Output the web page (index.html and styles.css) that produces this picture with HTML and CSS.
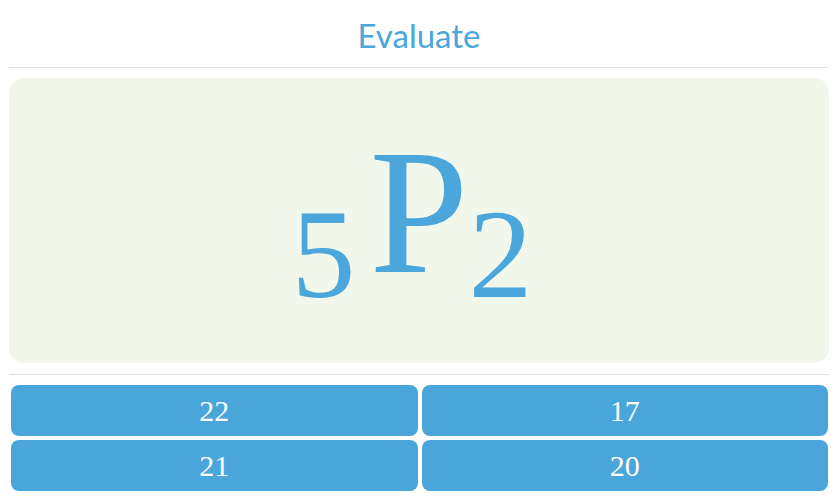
FILE: index.html
```html
<!DOCTYPE html>
<html>
<head>
<meta charset="utf-8">
<link rel="stylesheet" href="styles.css">
</head>
<body>
<div class="page">
  <header class="title">Evaluate</header>
  <div class="panel">
    <div class="math"><span class="pre">5</span><span class="main">P</span><span class="sub">2</span></div>
  </div>
  <div class="answers">
    <button class="ans">22</button>
    <button class="ans">17</button>
    <button class="ans">21</button>
    <button class="ans">20</button>
  </div>
</div>
</body>
</html>
```

FILE: styles.css
```css
html, body {
  margin: 0;
  padding: 0;
  background: #ffffff;
}
.page {
  margin: 0 11px 0 9px;
}
.title {
  height: 68px;
  border-bottom: 1px solid #e2e2e2;
  display: flex;
  align-items: center;
  justify-content: center;
  font-family: Lato, "Open Sans", sans-serif;
  font-size: 33px;
  color: #4aa6db;
  box-sizing: border-box;
  padding-top: 3px;
}
.panel {
  margin-top: 10px;
  height: 285px;
  background: #f2f7ec;
  border-radius: 15px;
  display: flex;
  align-items: center;
  justify-content: center;
}
.math {
  font-family: "Liberation Serif", "Times New Roman", serif;
  color: #4aa6db;
  line-height: 1;
  padding-right: 14px;
  padding-top: 0;
}
.pre {
  font-size: 128px;
  vertical-align: -25px;
  margin-right: 14px;
}
.main {
  font-size: 178px;
}
.sub {
  font-size: 128px;
  vertical-align: -25px;
}
.answers {
  margin-top: 11px;
  border-top: 1px solid #dde3ea;
  padding: 10px 1px 0 2px;
  display: grid;
  grid-template-columns: 1fr 1fr;
  column-gap: 4px;
  row-gap: 4px;
}
.ans {
  height: 51px;
  border: none;
  border-radius: 8px;
  background: #4aa6da;
  color: #ffffff;
  font-family: "Liberation Serif", "Times New Roman", serif;
  font-size: 30px;
  padding: 0;
  margin: 0;
}
```
